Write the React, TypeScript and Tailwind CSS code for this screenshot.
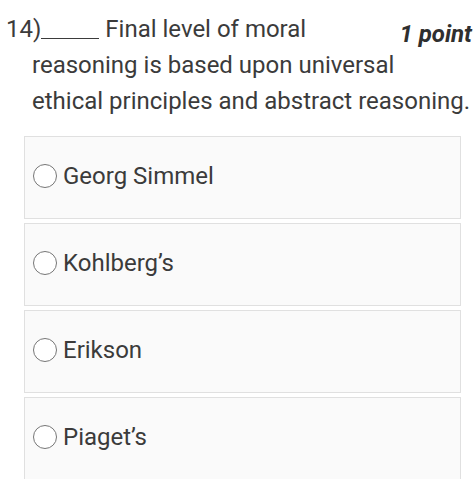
import React from "react";

const options = ["Georg Simmel", "Kohlberg’s", "Erikson", "Piaget’s"];

export default function App() {
  return (
    <div className="w-[474px] h-[479px] bg-white overflow-hidden font-['Roboto',sans-serif] text-[#3b3b3b]">
      <div className="pt-[11px] pl-[32px] pr-[2px] text-[24px] leading-[36px] indent-[-26px]">
        <span className="float-right indent-0 mt-[11px] h-[56px] text-[24px] leading-[24px] font-bold italic text-[#2f2f2f]">
          1 point
        </span>
        14)<span className="inline-block indent-0 w-[58px] h-[1.5px] bg-[#3b3b3b] translate-y-[2px]" /> Final level of moral reasoning is based upon universal ethical principles and abstract reasoning.
      </div>
      <div className="mt-[17px] ml-[24px] mr-[13px] flex flex-col gap-[4px]">
        {options.map((o) => (
          <div
            key={o}
            className="h-[83px] shrink-0 bg-[#fafafa] border border-[#e0e0e0] flex items-center pb-[4px] pl-[8px]"
          >
            <span className="w-[24px] h-[24px] rounded-full border-[1.5px] border-[#767676] bg-white shrink-0" />
            <span className="ml-[6px] text-[24px] leading-none text-[#3b3b3b]">{o}</span>
          </div>
        ))}
      </div>
    </div>
  );
}
